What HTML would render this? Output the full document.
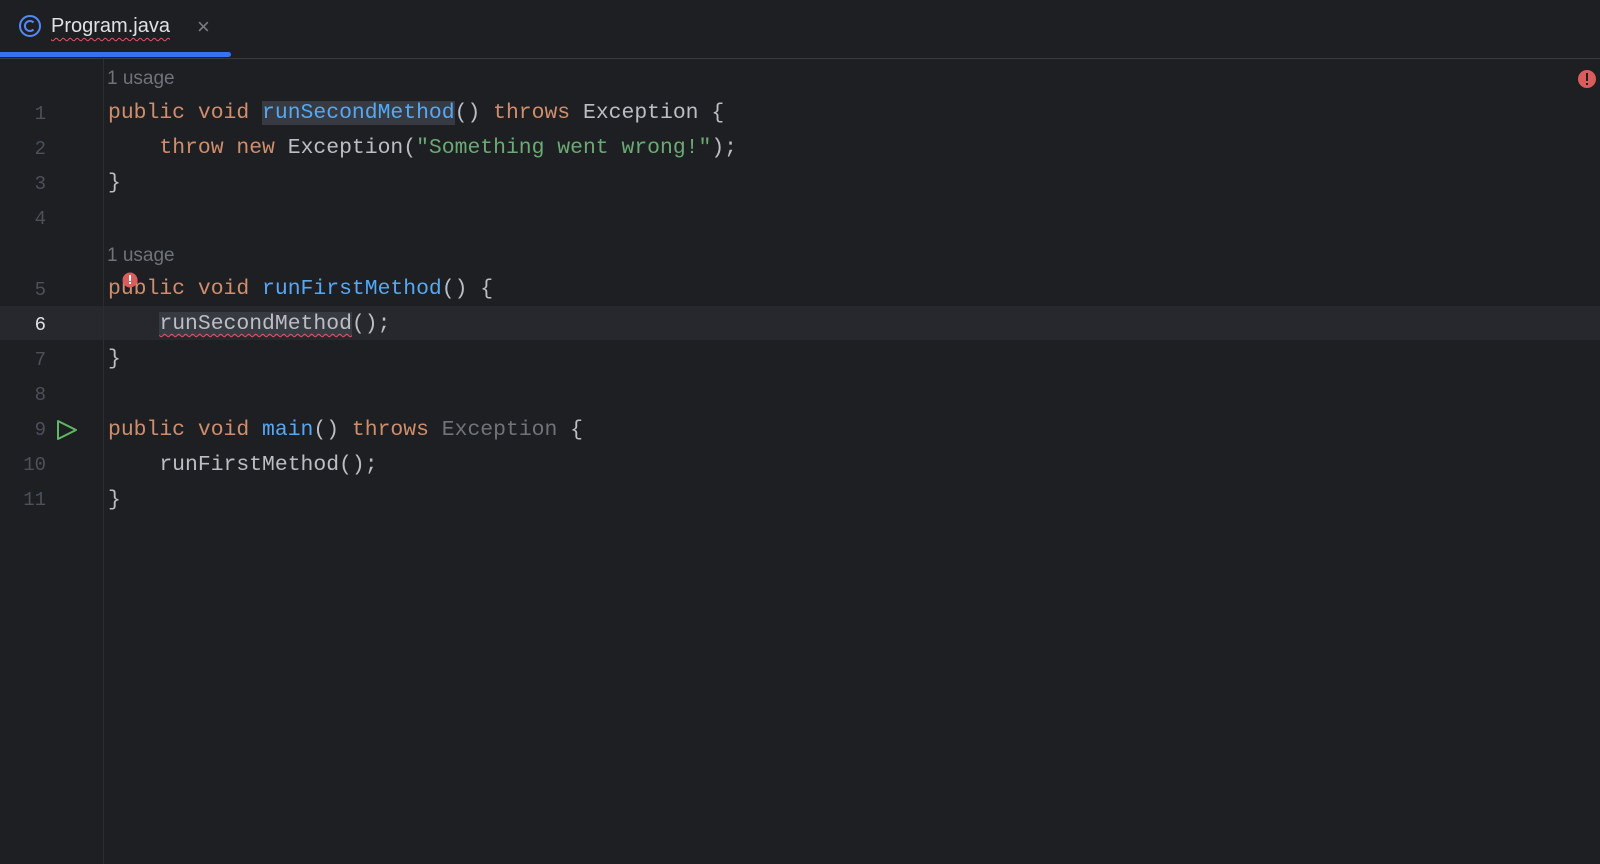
<!DOCTYPE html>
<html><head><style>
body{margin:0;width:1600px;height:864px;background:#1e1f22;overflow:hidden;font-family:"Liberation Mono",monospace;position:relative}
.tabbar{position:absolute;left:0;top:0;width:1600px;height:58px;background:#1e1f22;border-bottom:1px solid #393b40}
.tabline{position:absolute;left:0;top:52px;width:231px;height:5px;background:#3574f0;border-radius:0 3px 3px 0}
.tabtxt{position:absolute;left:51px;top:15px;font:20px "Liberation Sans",sans-serif;color:#dfe1e5;text-decoration:underline wavy #e55765;text-decoration-thickness:1px;text-underline-offset:5px}
.x{position:absolute;left:197px;top:14px;color:#7a7e85;font:22px "Liberation Sans",sans-serif}
.gutline{position:absolute;left:103px;top:59px;width:1px;height:805px;background:#2b2d30}
.cur{position:absolute;left:0;top:306px;width:1600px;height:34px;background:#26282e}
.ln{position:absolute;width:46px;text-align:right;color:#4b5059;font-size:19px;left:0}
.code{position:absolute;left:108px;font-size:21.4px;color:#bcbec4;white-space:pre}
.u{position:absolute;left:107px;font:19px "Liberation Sans",sans-serif;color:#6f737a}
.k{color:#cf8e6d}.f{color:#56a8f5}.s{color:#6aab73}.g{color:#6f737a}
</style></head><body>
<div class="tabbar"></div>
<svg style="position:absolute;left:18px;top:14px" width="24" height="24"><circle cx="12" cy="12" r="10" fill="none" stroke="#548af7" stroke-width="2"/><path d="M15.5 8.5a5 5 0 1 0 0 7" fill="none" stroke="#548af7" stroke-width="2"/></svg>
<div class="tabtxt">Program.java</div>
<div class="x">×</div>
<div class="tabline"></div>
<div class="cur"></div>
<div class="gutline"></div>
<svg style="position:absolute;left:1577px;top:69px" width="20" height="20"><circle cx="10" cy="10" r="9" fill="#db5c5c"/><rect x="9" y="4" width="2" height="8" fill="#1e1f22"/><rect x="9" y="14" width="2" height="2" fill="#1e1f22"/></svg>
<div class="u" style="top:68px">1 usage</div>
<div class="u" style="top:245px">1 usage</div>
<div class="ln" style="top:103px">1</div>
<div class="ln" style="top:138px">2</div>
<div class="ln" style="top:173px">3</div>
<div class="ln" style="top:208px">4</div>
<div class="ln" style="top:279px">5</div>
<div class="ln" style="top:314px;color:#dfe1e5">6</div>
<div class="ln" style="top:349px">7</div>
<div class="ln" style="top:384px">8</div>
<div class="ln" style="top:419px">9</div>
<div class="ln" style="top:454px">10</div>
<div class="ln" style="top:489px">11</div>
<svg style="position:absolute;left:55px;top:418px" width="24" height="24"><path d="M3 3L21 12L3 21Z" fill="none" stroke="#5fb865" stroke-width="2" stroke-linejoin="round"/></svg>
<div class="code" style="top:101px"><span class="k">public void </span><span class="f" style="background:#373b41">runSecondMethod</span>() <span class="k">throws</span> Exception {</div>
<div class="code" style="top:136px">    <span class="k">throw new</span> Exception(<span class="s">"Something went wrong!"</span>);</div>
<div class="code" style="top:171px">}</div>
<div class="code" style="top:277px"><span class="k">public void </span><span class="f">runFirstMethod</span>() {</div>
<svg style="position:absolute;left:122px;top:272px" width="16" height="22"><circle cx="8" cy="8" r="7.5" fill="#db5c5c"/><rect x="7" y="3" width="2" height="6" fill="#fff"/><rect x="7" y="10" width="2" height="2" fill="#fff"/></svg>
<div class="code" style="top:312px">    <span style="background:#373b41;text-decoration:underline wavy #e55765;text-decoration-thickness:1px;text-underline-offset:4px">runSecondMethod</span>();</div>
<div class="code" style="top:347px">}</div>
<div class="code" style="top:418px"><span class="k">public void </span><span class="f">main</span>() <span class="k">throws</span> <span class="g">Exception</span> {</div>
<div class="code" style="top:453px">    runFirstMethod();</div>
<div class="code" style="top:488px">}</div>
</body></html>
